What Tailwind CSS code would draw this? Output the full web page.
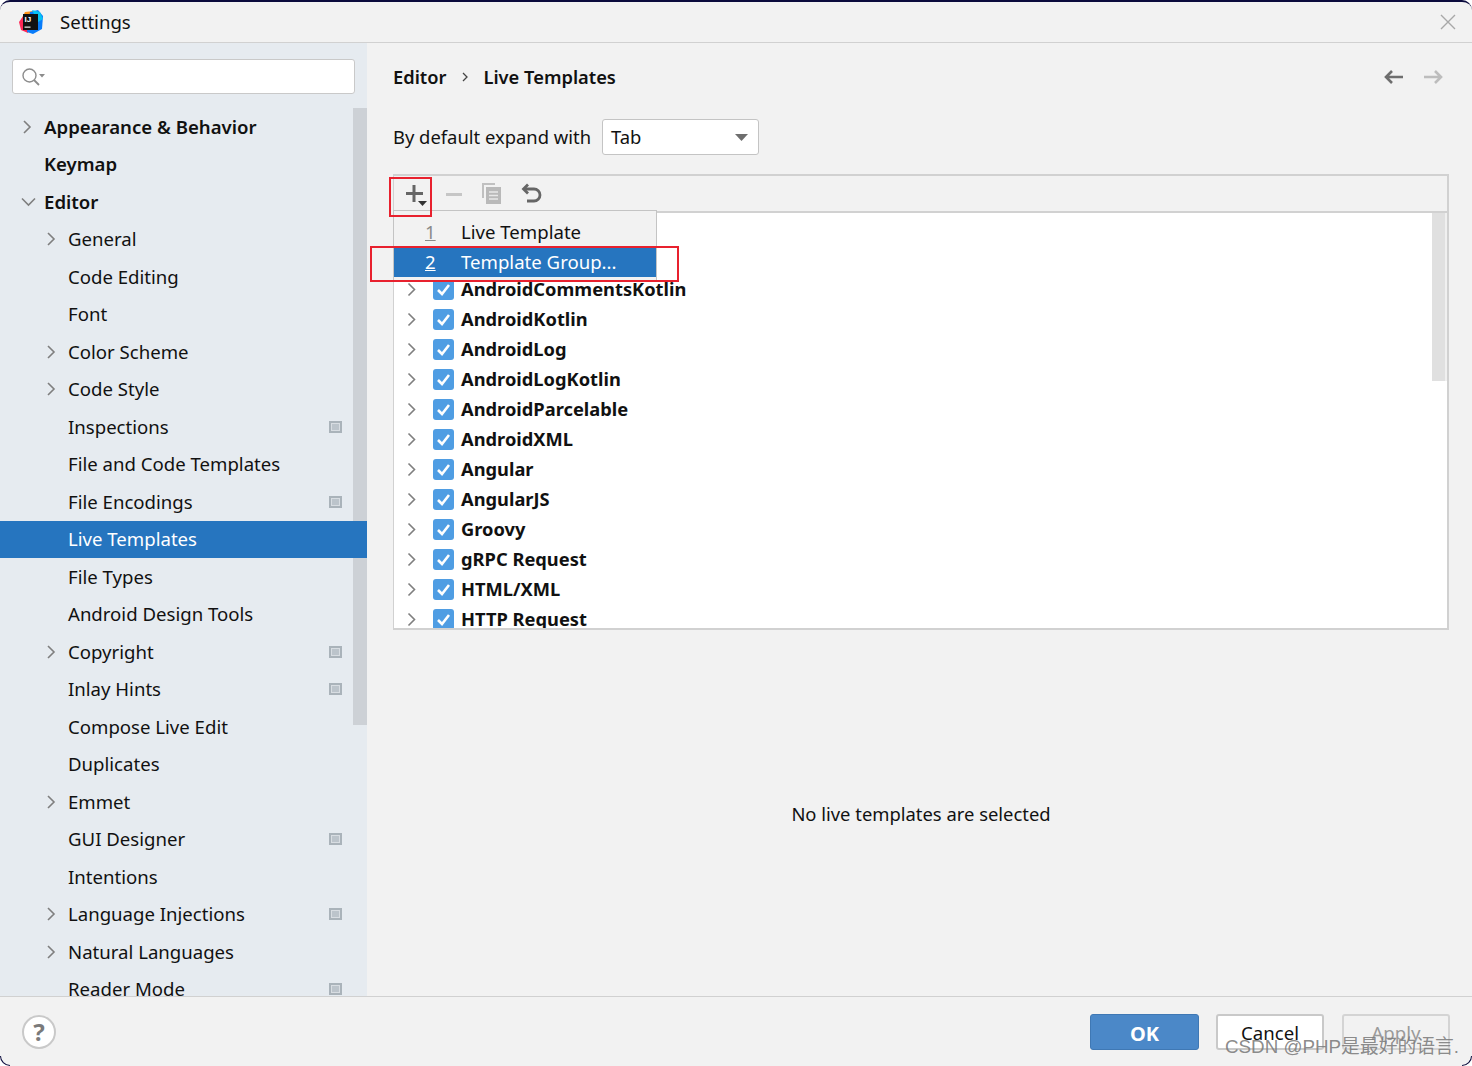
<!DOCTYPE html>
<html lang="en">
  <head>
    <meta charset="UTF-8" />
    <title>Settings</title>
    <script src="https://cdn.jsdelivr.net/npm/@tailwindcss/browser@4"></script>
  </head>
  <body class="bg-white font-['Noto_Sans','Liberation_Sans',sans-serif] text-[18.6px] text-[#111] overflow-hidden">
    <div class="relative w-[1472px] h-[1066px] flex flex-col bg-[#f2f2f2] rounded-[10px] border-t-2 border-[#0b0b3d] overflow-hidden">
      <!-- title bar -->
      <header class="h-[41px] shrink-0 flex items-center border-b border-[#d1d1d1] pl-[18px] pr-[16px]">
        <svg class="w-[25px] h-[25px]" viewBox="0 0 25 25">
          <polygon points="7,2 16,1 14,12 3,10" fill="#ff9419" />
          <polygon points="1,12 6,5 12,14 10,23 3,20" fill="#fe2857" />
          <polygon points="12,2 20,0 25,6 24,19 15,24 9,22" fill="#087cfa" />
          <polygon points="14,0 22,2 25,9 20,12" fill="#07c3f2" />
          <rect x="5" y="4" width="15" height="16" fill="#111" />
          <text x="6.500" y="12" font-size="8" font-weight="700" fill="#fff" font-family="Liberation Sans">IJ</text>
          <rect x="6.500" y="16.500" width="6" height="1.300" fill="#ddd" />
        </svg>
        <span class="ml-[17px]">Settings</span>
        <svg class="ml-auto w-[16px] h-[16px]" viewBox="0 0 16 16" fill="none" stroke="#a8a8a8" stroke-width="1.4">
          <path d="M1 1l14 14M15 1L1 15" />
        </svg>
      </header>

      <div class="flex flex-1 min-h-0">
        <!-- sidebar -->
        <aside class="relative w-[367px] shrink-0 bg-[#e6ebf0] overflow-hidden">
          <div class="mt-[16px] ml-[12px] w-[343px] h-[35px] bg-white border border-[#c9c9c9] rounded-[3px] flex items-center pl-[8px]">
            <svg class="w-[26px] h-[20px]" viewBox="0 0 26 20" fill="none">
              <circle cx="8.500" cy="8.500" r="6.500" stroke="#8c8c8c" stroke-width="1.400" />
              <path d="M13 13l5 5" stroke="#8c8c8c" stroke-width="1.800" />
              <path d="M18 7h6l-3 3.500z" fill="#8c8c8c" />
            </svg>
          </div>

          <nav class="relative z-10 mt-[14px]">
            <div class="h-[37.5px] flex items-center pl-[22px] font-semibold">
              <svg class="w-[10px] h-[16px] mr-[12px]" viewBox="0 0 10 16" fill="none" stroke="#7f7f7f" stroke-width="1.6"><path d="M2 2l6 6-6 6" /></svg>Appearance &amp; Behavior
            </div>
            <div class="h-[37.5px] flex items-center pl-[44px] font-semibold">Keymap</div>
            <div class="h-[37.5px] flex items-center pl-[21px] font-semibold">
              <svg class="w-[15px] h-[10px] mr-[8px]" viewBox="0 0 15 10" fill="none" stroke="#7f7f7f" stroke-width="1.6"><path d="M1 1.500l6.500 6.500 6.500-6.500" /></svg>Editor
            </div>
            <div class="h-[37.5px] flex items-center pl-[46px]">
              <svg class="w-[10px] h-[16px] mr-[12px]" viewBox="0 0 10 16" fill="none" stroke="#7f7f7f" stroke-width="1.6"><path d="M2 2l6 6-6 6" /></svg>General
            </div>
            <div class="h-[37.5px] flex items-center pl-[68px]">Code Editing</div>
            <div class="h-[37.5px] flex items-center pl-[68px]">Font</div>
            <div class="h-[37.5px] flex items-center pl-[46px]">
              <svg class="w-[10px] h-[16px] mr-[12px]" viewBox="0 0 10 16" fill="none" stroke="#7f7f7f" stroke-width="1.6"><path d="M2 2l6 6-6 6" /></svg>Color Scheme
            </div>
            <div class="h-[37.5px] flex items-center pl-[46px]">
              <svg class="w-[10px] h-[16px] mr-[12px]" viewBox="0 0 10 16" fill="none" stroke="#7f7f7f" stroke-width="1.6"><path d="M2 2l6 6-6 6" /></svg>Code Style
            </div>
            <div class="h-[37.5px] flex items-center pl-[68px] pr-[25px] justify-between">Inspections
              <span class="w-[13px] h-[12px] bg-[#aab3ba] p-[2px]"><span class="block w-full h-full bg-[#bcc4cb] border border-[#d8dde2]"></span></span>
            </div>
            <div class="h-[37.5px] flex items-center pl-[68px]">File and Code Templates</div>
            <div class="h-[37.5px] flex items-center pl-[68px] pr-[25px] justify-between">File Encodings
              <span class="w-[13px] h-[12px] bg-[#aab3ba] p-[2px]"><span class="block w-full h-full bg-[#bcc4cb] border border-[#d8dde2]"></span></span>
            </div>
            <div class="h-[37.5px] flex items-center pl-[68px] bg-[#2675bf] text-white">Live Templates</div>
            <div class="h-[37.5px] flex items-center pl-[68px]">File Types</div>
            <div class="h-[37.5px] flex items-center pl-[68px]">Android Design Tools</div>
            <div class="h-[37.5px] flex items-center pl-[46px] pr-[25px]">
              <svg class="w-[10px] h-[16px] mr-[12px]" viewBox="0 0 10 16" fill="none" stroke="#7f7f7f" stroke-width="1.6"><path d="M2 2l6 6-6 6" /></svg>Copyright
              <span class="ml-auto w-[13px] h-[12px] bg-[#aab3ba] p-[2px]"><span class="block w-full h-full bg-[#bcc4cb] border border-[#d8dde2]"></span></span>
            </div>
            <div class="h-[37.5px] flex items-center pl-[68px] pr-[25px] justify-between">Inlay Hints
              <span class="w-[13px] h-[12px] bg-[#aab3ba] p-[2px]"><span class="block w-full h-full bg-[#bcc4cb] border border-[#d8dde2]"></span></span>
            </div>
            <div class="h-[37.5px] flex items-center pl-[68px]">Compose Live Edit</div>
            <div class="h-[37.5px] flex items-center pl-[68px]">Duplicates</div>
            <div class="h-[37.5px] flex items-center pl-[46px]">
              <svg class="w-[10px] h-[16px] mr-[12px]" viewBox="0 0 10 16" fill="none" stroke="#7f7f7f" stroke-width="1.6"><path d="M2 2l6 6-6 6" /></svg>Emmet
            </div>
            <div class="h-[37.5px] flex items-center pl-[68px] pr-[25px] justify-between">GUI Designer
              <span class="w-[13px] h-[12px] bg-[#aab3ba] p-[2px]"><span class="block w-full h-full bg-[#bcc4cb] border border-[#d8dde2]"></span></span>
            </div>
            <div class="h-[37.5px] flex items-center pl-[68px]">Intentions</div>
            <div class="h-[37.5px] flex items-center pl-[46px] pr-[25px]">
              <svg class="w-[10px] h-[16px] mr-[12px]" viewBox="0 0 10 16" fill="none" stroke="#7f7f7f" stroke-width="1.6"><path d="M2 2l6 6-6 6" /></svg>Language Injections
              <span class="ml-auto w-[13px] h-[12px] bg-[#aab3ba] p-[2px]"><span class="block w-full h-full bg-[#bcc4cb] border border-[#d8dde2]"></span></span>
            </div>
            <div class="h-[37.5px] flex items-center pl-[46px]">
              <svg class="w-[10px] h-[16px] mr-[12px]" viewBox="0 0 10 16" fill="none" stroke="#7f7f7f" stroke-width="1.6"><path d="M2 2l6 6-6 6" /></svg>Natural Languages
            </div>
            <div class="h-[37.5px] flex items-center pl-[68px] pr-[25px] justify-between">Reader Mode
              <span class="w-[13px] h-[12px] bg-[#aab3ba] p-[2px]"><span class="block w-full h-full bg-[#bcc4cb] border border-[#d8dde2]"></span></span>
            </div>
          </nav>

          <!-- sidebar scrollbar -->
          <div class="absolute left-[353px] top-[65px] w-[14px] h-[617px] bg-[#cdd1d6]"></div>
        </aside>

        <!-- content -->
        <main class="relative flex-1 min-w-0 pl-[26px] pr-[23px] flex flex-col">
          <div class="h-[67px] shrink-0 flex items-center font-semibold text-[18.3px]">
            Editor
            <svg class="ml-[15px] mr-[14px] w-[8px] h-[12px]" viewBox="0 0 8 12" fill="none" stroke="#444" stroke-width="1.3"><path d="M2 2l4 4-4 4" /></svg>
            Live Templates
            <svg class="ml-auto w-[20px] h-[16px]" viewBox="0 0 20 16" fill="none" stroke="#6e6e6e" stroke-width="2.6"><path d="M20 8H3M9 2L3 8l6 6" /></svg>
            <svg class="ml-[21px] mr-[5px] w-[20px] h-[16px]" viewBox="0 0 20 16" fill="none" stroke="#bdbdbd" stroke-width="2.6"><path d="M0 8h17M11 2l6 6-6 6" /></svg>
          </div>

          <div class="h-[36px] shrink-0 flex items-center mt-[9px] text-[18.4px]">
            By default expand with
            <div class="ml-[11px] w-[157px] h-[36px] bg-white border border-[#c4c4c4] rounded-[3px] flex items-center justify-between pl-[8px] pr-[10px]">
              Tab
              <svg class="w-[13px] h-[7px]" viewBox="0 0 13 7"><path d="M0 0h13l-6.500 7z" fill="#6e6e6e" /></svg>
            </div>
          </div>

          <section class="mt-[19px] h-[456px] shrink-0 border-2 border-l border-[#d1d1d1] flex flex-col">
            <div class="h-[37px] shrink-0 border-b-2 border-[#d1d1d1] flex items-center pl-[11px] gap-[19px]">
              <svg class="w-[22px] h-[24px] mt-[3px]" viewBox="0 0 22 24" fill="none">
                <path d="M9 2v17M1 10.500h17" stroke="#666" stroke-width="3" />
                <path d="M13 18h9l-4.500 5z" fill="#333" />
              </svg>
              <svg class="w-[16px] h-[3px] mt-[1px]" viewBox="0 0 16 3"><rect width="16" height="3" fill="#c6c6c6" /></svg>
              <svg class="w-[19px] h-[21px] ml-[1px]" viewBox="0 0 19 21">
                <path d="M0 0h13v2H2v13H0z" fill="#c0c0c0" />
                <rect x="4" y="4" width="15" height="17" fill="#b9b9b9" />
                <path d="M7 9h9M7 12.500h9M7 16h9" stroke="#e8e8e8" stroke-width="1.300" />
              </svg>
              <svg class="w-[21px] h-[21px] ml-[1px]" viewBox="0 0 21 21" fill="none" stroke="#666" stroke-width="2.8">
                <path d="M7 1.500L2.500 6 7 10.500" /><path d="M3 6h10a5.500 5.500 0 0 1 0 12H6" />
              </svg>
            </div>

            <div class="relative flex-1 min-h-0 bg-white overflow-hidden">
              <div class="pt-px font-bold text-[18.3px]">
                <div class="h-[30px] flex items-center pl-[13px]">
                  <svg class="w-[9px] h-[15px] mr-[17px]" viewBox="0 0 9 15" fill="none" stroke="#7f7f7f" stroke-width="1.6"><path d="M1.500 1.500l6 6-6 6" /></svg>
                  <svg class="w-[21px] h-[21px] mr-[7px]" viewBox="0 0 21 21"><rect width="21" height="21" rx="3" fill="#4f9de3" /><path d="M5 11l4 4 7-9" fill="none" stroke="#fff" stroke-width="2.6" /></svg>Android
                </div>
                <div class="h-[30px] flex items-center pl-[13px]">
                  <svg class="w-[9px] h-[15px] mr-[17px]" viewBox="0 0 9 15" fill="none" stroke="#7f7f7f" stroke-width="1.6"><path d="M1.500 1.500l6 6-6 6" /></svg>
                  <svg class="w-[21px] h-[21px] mr-[7px]" viewBox="0 0 21 21"><rect width="21" height="21" rx="3" fill="#4f9de3" /><path d="M5 11l4 4 7-9" fill="none" stroke="#fff" stroke-width="2.6" /></svg>AndroidComments
                </div>
                <div class="h-[30px] flex items-center pl-[13px]">
                  <svg class="w-[9px] h-[15px] mr-[17px]" viewBox="0 0 9 15" fill="none" stroke="#7f7f7f" stroke-width="1.6"><path d="M1.500 1.500l6 6-6 6" /></svg>
                  <svg class="w-[21px] h-[21px] mr-[7px]" viewBox="0 0 21 21"><rect width="21" height="21" rx="3" fill="#4f9de3" /><path d="M5 11l4 4 7-9" fill="none" stroke="#fff" stroke-width="2.6" /></svg>AndroidCommentsKotlin
                </div>
                <div class="h-[30px] flex items-center pl-[13px]">
                  <svg class="w-[9px] h-[15px] mr-[17px]" viewBox="0 0 9 15" fill="none" stroke="#7f7f7f" stroke-width="1.6"><path d="M1.500 1.500l6 6-6 6" /></svg>
                  <svg class="w-[21px] h-[21px] mr-[7px]" viewBox="0 0 21 21"><rect width="21" height="21" rx="3" fill="#4f9de3" /><path d="M5 11l4 4 7-9" fill="none" stroke="#fff" stroke-width="2.6" /></svg>AndroidKotlin
                </div>
                <div class="h-[30px] flex items-center pl-[13px]">
                  <svg class="w-[9px] h-[15px] mr-[17px]" viewBox="0 0 9 15" fill="none" stroke="#7f7f7f" stroke-width="1.6"><path d="M1.500 1.500l6 6-6 6" /></svg>
                  <svg class="w-[21px] h-[21px] mr-[7px]" viewBox="0 0 21 21"><rect width="21" height="21" rx="3" fill="#4f9de3" /><path d="M5 11l4 4 7-9" fill="none" stroke="#fff" stroke-width="2.6" /></svg>AndroidLog
                </div>
                <div class="h-[30px] flex items-center pl-[13px]">
                  <svg class="w-[9px] h-[15px] mr-[17px]" viewBox="0 0 9 15" fill="none" stroke="#7f7f7f" stroke-width="1.6"><path d="M1.500 1.500l6 6-6 6" /></svg>
                  <svg class="w-[21px] h-[21px] mr-[7px]" viewBox="0 0 21 21"><rect width="21" height="21" rx="3" fill="#4f9de3" /><path d="M5 11l4 4 7-9" fill="none" stroke="#fff" stroke-width="2.6" /></svg>AndroidLogKotlin
                </div>
                <div class="h-[30px] flex items-center pl-[13px]">
                  <svg class="w-[9px] h-[15px] mr-[17px]" viewBox="0 0 9 15" fill="none" stroke="#7f7f7f" stroke-width="1.6"><path d="M1.500 1.500l6 6-6 6" /></svg>
                  <svg class="w-[21px] h-[21px] mr-[7px]" viewBox="0 0 21 21"><rect width="21" height="21" rx="3" fill="#4f9de3" /><path d="M5 11l4 4 7-9" fill="none" stroke="#fff" stroke-width="2.6" /></svg>AndroidParcelable
                </div>
                <div class="h-[30px] flex items-center pl-[13px]">
                  <svg class="w-[9px] h-[15px] mr-[17px]" viewBox="0 0 9 15" fill="none" stroke="#7f7f7f" stroke-width="1.6"><path d="M1.500 1.500l6 6-6 6" /></svg>
                  <svg class="w-[21px] h-[21px] mr-[7px]" viewBox="0 0 21 21"><rect width="21" height="21" rx="3" fill="#4f9de3" /><path d="M5 11l4 4 7-9" fill="none" stroke="#fff" stroke-width="2.6" /></svg>AndroidXML
                </div>
                <div class="h-[30px] flex items-center pl-[13px]">
                  <svg class="w-[9px] h-[15px] mr-[17px]" viewBox="0 0 9 15" fill="none" stroke="#7f7f7f" stroke-width="1.6"><path d="M1.500 1.500l6 6-6 6" /></svg>
                  <svg class="w-[21px] h-[21px] mr-[7px]" viewBox="0 0 21 21"><rect width="21" height="21" rx="3" fill="#4f9de3" /><path d="M5 11l4 4 7-9" fill="none" stroke="#fff" stroke-width="2.6" /></svg>Angular
                </div>
                <div class="h-[30px] flex items-center pl-[13px]">
                  <svg class="w-[9px] h-[15px] mr-[17px]" viewBox="0 0 9 15" fill="none" stroke="#7f7f7f" stroke-width="1.6"><path d="M1.500 1.500l6 6-6 6" /></svg>
                  <svg class="w-[21px] h-[21px] mr-[7px]" viewBox="0 0 21 21"><rect width="21" height="21" rx="3" fill="#4f9de3" /><path d="M5 11l4 4 7-9" fill="none" stroke="#fff" stroke-width="2.6" /></svg>AngularJS
                </div>
                <div class="h-[30px] flex items-center pl-[13px]">
                  <svg class="w-[9px] h-[15px] mr-[17px]" viewBox="0 0 9 15" fill="none" stroke="#7f7f7f" stroke-width="1.6"><path d="M1.500 1.500l6 6-6 6" /></svg>
                  <svg class="w-[21px] h-[21px] mr-[7px]" viewBox="0 0 21 21"><rect width="21" height="21" rx="3" fill="#4f9de3" /><path d="M5 11l4 4 7-9" fill="none" stroke="#fff" stroke-width="2.6" /></svg>Groovy
                </div>
                <div class="h-[30px] flex items-center pl-[13px]">
                  <svg class="w-[9px] h-[15px] mr-[17px]" viewBox="0 0 9 15" fill="none" stroke="#7f7f7f" stroke-width="1.6"><path d="M1.500 1.500l6 6-6 6" /></svg>
                  <svg class="w-[21px] h-[21px] mr-[7px]" viewBox="0 0 21 21"><rect width="21" height="21" rx="3" fill="#4f9de3" /><path d="M5 11l4 4 7-9" fill="none" stroke="#fff" stroke-width="2.6" /></svg>gRPC Request
                </div>
                <div class="h-[30px] flex items-center pl-[13px]">
                  <svg class="w-[9px] h-[15px] mr-[17px]" viewBox="0 0 9 15" fill="none" stroke="#7f7f7f" stroke-width="1.6"><path d="M1.500 1.500l6 6-6 6" /></svg>
                  <svg class="w-[21px] h-[21px] mr-[7px]" viewBox="0 0 21 21"><rect width="21" height="21" rx="3" fill="#4f9de3" /><path d="M5 11l4 4 7-9" fill="none" stroke="#fff" stroke-width="2.6" /></svg>HTML/XML
                </div>
                <div class="h-[30px] flex items-center pl-[13px]">
                  <svg class="w-[9px] h-[15px] mr-[17px]" viewBox="0 0 9 15" fill="none" stroke="#7f7f7f" stroke-width="1.6"><path d="M1.500 1.500l6 6-6 6" /></svg>
                  <svg class="w-[21px] h-[21px] mr-[7px]" viewBox="0 0 21 21"><rect width="21" height="21" rx="3" fill="#4f9de3" /><path d="M5 11l4 4 7-9" fill="none" stroke="#fff" stroke-width="2.6" /></svg>HTTP Request
                </div>
              </div>
              <!-- list scrollbar -->
              <div class="absolute right-0 top-0 w-[15px] h-[168px] bg-[#e0e0e0] border-r-2 border-[#f0f0f0]"></div>
            </div>
          </section>

          <div class="flex-1 flex items-center justify-center pt-[1px] text-[18.4px]">No live templates are selected</div>

          <!-- popup menu -->
          <div class="absolute left-[26px] top-[167px] w-[264px] h-[72px] bg-[#f2f2f2] border border-[#c4c4c4] pt-[6px] z-10">
            <div class="h-[30px] flex items-center pl-[31px]"><span class="w-[36px] underline text-[#8a8a8a]">1</span>Live Template</div>
            <div class="h-[30px] flex items-center pl-[31px] bg-[#2675bf] text-white"><span class="w-[36px] underline">2</span>Template Group...</div>
          </div>
          <!-- red annotation boxes -->
          <div class="absolute left-[22px] top-[134px] w-[43px] h-[40px] border-2 border-[#e8212e] z-20"></div>
          <div class="absolute left-[3px] top-[203px] w-[309px] h-[36px] border-2 border-[#e8212e] z-20"></div>
        </main>
      </div>

      <!-- footer -->
      <footer class="h-[70px] shrink-0 border-t border-[#d1d1d1] flex items-center pl-[22px] pr-[22px]">
        <div class="w-[34px] h-[34px] rounded-full bg-white border-2 border-[#c9c9c9] flex items-center justify-center text-[#7a7a7a] font-bold text-[24px]">?</div>
        <button class="ml-auto w-[109px] h-[36px] rounded-[3px] bg-[#4b88c8] border border-[#3f78b4] text-white font-bold text-[20px] pt-[4px]">OK</button>
        <button class="ml-[17px] w-[108px] h-[36px] rounded-[3px] bg-white border-2 border-[#c9c9c9] text-[#111] pt-[2px]">Cancel</button>
        <button class="ml-[18px] w-[108px] h-[36px] rounded-[3px] border-2 border-[#d4d4d4] text-[#9a9a9a] pt-[2px]">Apply</button>
      </footer>

      <!-- bottom window corners -->
      <svg class="absolute left-0 bottom-0 w-[10px] h-[10px]" viewBox="0 0 10 10" fill="none" stroke="#0b0b3d" stroke-width="2"><path d="M0 0a10 10 0 0 0 10 10" /></svg>
      <svg class="absolute right-0 bottom-0 w-[10px] h-[10px]" viewBox="0 0 10 10" fill="none" stroke="#0b0b3d" stroke-width="2"><path d="M10 0a10 10 0 0 1-10 10" /></svg>

      <!-- watermark -->
      <div class="absolute left-[1225px] top-[1031px] z-30 text-[18.8px] text-[#7d7d7d]/90 font-['Liberation_Sans','Noto_Sans_CJK_SC',sans-serif] whitespace-nowrap">CSDN @PHP是最好的语言.</div>
    </div>
  </body>
</html>
